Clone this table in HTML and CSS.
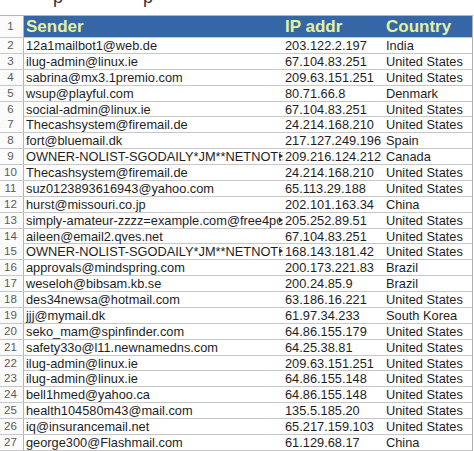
FILE: index.html
```html
<!DOCTYPE html>
<html>
<head>
<meta charset="utf-8">
<link rel="stylesheet" href="styles.css">
</head>
<body>
<div class="caption"><span class="cap-a">p</span><span class="cap-b">p</span></div>
<div class="sheet">
  <div class="row head"><div class="num">1</div><div class="cell a">Sender</div><div class="cell b">IP addr</div><div class="cell c">Country</div></div>
  <div class="row"><div class="num">2</div><div class="cell a">12a1mailbot1@web.de</div><div class="cell b">203.122.2.197</div><div class="cell c">India</div></div>
  <div class="row"><div class="num">3</div><div class="cell a">ilug-admin@linux.ie</div><div class="cell b">67.104.83.251</div><div class="cell c">United States</div></div>
  <div class="row"><div class="num">4</div><div class="cell a">sabrina@mx3.1premio.com</div><div class="cell b">209.63.151.251</div><div class="cell c">United States</div></div>
  <div class="row"><div class="num">5</div><div class="cell a">wsup@playful.com</div><div class="cell b">80.71.66.8</div><div class="cell c">Denmark</div></div>
  <div class="row"><div class="num">6</div><div class="cell a">social-admin@linux.ie</div><div class="cell b">67.104.83.251</div><div class="cell c">United States</div></div>
  <div class="row"><div class="num">7</div><div class="cell a">Thecashsystem@firemail.de</div><div class="cell b">24.214.168.210</div><div class="cell c">United States</div></div>
  <div class="row"><div class="num">8</div><div class="cell a">fort@bluemail.dk</div><div class="cell b">217.127.249.196</div><div class="cell c">Spain</div></div>
  <div class="row"><div class="num">9</div><div class="cell a over">OWNER-NOLIST-SGODAILY*JM**NETNOTIFY@sgodaily.com</div><div class="cell b">209.216.124.212</div><div class="cell c">Canada</div></div>
  <div class="row"><div class="num">10</div><div class="cell a">Thecashsystem@firemail.de</div><div class="cell b">24.214.168.210</div><div class="cell c">United States</div></div>
  <div class="row"><div class="num">11</div><div class="cell a">suz0123893616943@yahoo.com</div><div class="cell b">65.113.29.188</div><div class="cell c">United States</div></div>
  <div class="row"><div class="num">12</div><div class="cell a">hurst@missouri.co.jp</div><div class="cell b">202.101.163.34</div><div class="cell c">China</div></div>
  <div class="row"><div class="num">13</div><div class="cell a over">simply-amateur-zzzz=example.com@free4porn.com</div><div class="cell b">205.252.89.51</div><div class="cell c">United States</div></div>
  <div class="row"><div class="num">14</div><div class="cell a">aileen@email2.qves.net</div><div class="cell b">67.104.83.251</div><div class="cell c">United States</div></div>
  <div class="row"><div class="num">15</div><div class="cell a over">OWNER-NOLIST-SGODAILY*JM**NETNOTIFY@sgodaily.com</div><div class="cell b">168.143.181.42</div><div class="cell c">United States</div></div>
  <div class="row"><div class="num">16</div><div class="cell a">approvals@mindspring.com</div><div class="cell b">200.173.221.83</div><div class="cell c">Brazil</div></div>
  <div class="row"><div class="num">17</div><div class="cell a">weseloh@bibsam.kb.se</div><div class="cell b">200.24.85.9</div><div class="cell c">Brazil</div></div>
  <div class="row"><div class="num">18</div><div class="cell a">des34newsa@hotmail.com</div><div class="cell b">63.186.16.221</div><div class="cell c">United States</div></div>
  <div class="row"><div class="num">19</div><div class="cell a">jjj@mymail.dk</div><div class="cell b">61.97.34.233</div><div class="cell c">South Korea</div></div>
  <div class="row"><div class="num">20</div><div class="cell a">seko_mam@spinfinder.com</div><div class="cell b">64.86.155.179</div><div class="cell c">United States</div></div>
  <div class="row"><div class="num">21</div><div class="cell a">safety33o@l11.newnamedns.com</div><div class="cell b">64.25.38.81</div><div class="cell c">United States</div></div>
  <div class="row"><div class="num">22</div><div class="cell a">ilug-admin@linux.ie</div><div class="cell b">209.63.151.251</div><div class="cell c">United States</div></div>
  <div class="row"><div class="num">23</div><div class="cell a">ilug-admin@linux.ie</div><div class="cell b">64.86.155.148</div><div class="cell c">United States</div></div>
  <div class="row"><div class="num">24</div><div class="cell a">bell1hmed@yahoo.ca</div><div class="cell b">64.86.155.148</div><div class="cell c">United States</div></div>
  <div class="row"><div class="num">25</div><div class="cell a">health104580m43@mail.com</div><div class="cell b">135.5.185.20</div><div class="cell c">United States</div></div>
  <div class="row"><div class="num">26</div><div class="cell a">iq@insurancemail.net</div><div class="cell b">65.217.159.103</div><div class="cell c">United States</div></div>
  <div class="row"><div class="num">27</div><div class="cell a">george300@Flashmail.com</div><div class="cell b">61.129.68.17</div><div class="cell c">China</div></div>
</div>
</body>
</html>
```
FILE: styles.css
```css
html, body {
  margin: 0;
  padding: 0;
  background: #ffffff;
}

body {
  width: 474px;
  font-family: "Liberation Sans", Arial, sans-serif;
  color: #1e1e1e;
}

.caption {
  height: 15px;
  overflow: hidden;
  font-size: 18px;
  line-height: 18px;
  color: #333;
  display: flex;
}

.caption span {
  margin-top: -12px;
}

.cap-a { margin-left: 53px; }
.cap-b { margin-left: 80px; }

.sheet {
  width: 472px;
  border-top: 1px solid #b4b4b4;
  border-right: 1px solid #b4b4b4;
}

.row {
  display: grid;
  grid-template-columns: 24px 259px 100px 89px;
  height: 15.88px;
  box-sizing: border-box;
  border-bottom: 1px solid #c8c8c8;
  font-size: 12.8px;
  line-height: 15px;
}

.row.head {
  height: 22px;
  line-height: 21px;
}

.num {
  box-sizing: border-box;
  border-right: 1px solid #b4b4b4;
  text-align: center;
  color: #5a5a5a;
  font-size: 11.5px;
  background: #fbfbfb;
  padding-right: 2px;
}

.cell {
  padding-left: 2px;
  white-space: nowrap;
  overflow: hidden;
}

.cell.b { padding-left: 2px; }
.cell.c { padding-left: 3px; }

.head .cell {
  background: #3566a6;
  color: #e3f1a2;
  font-weight: bold;
  font-size: 17px;
}

.over {
  position: relative;
  padding-right: 5px;
  text-overflow: clip;
}

.over::after {
  content: "";
  position: absolute;
  right: 0;
  top: 4px;
  border-left: 4px solid #333;
  border-top: 3.5px solid transparent;
  border-bottom: 3.5px solid transparent;
  background: #fff;
}
```
